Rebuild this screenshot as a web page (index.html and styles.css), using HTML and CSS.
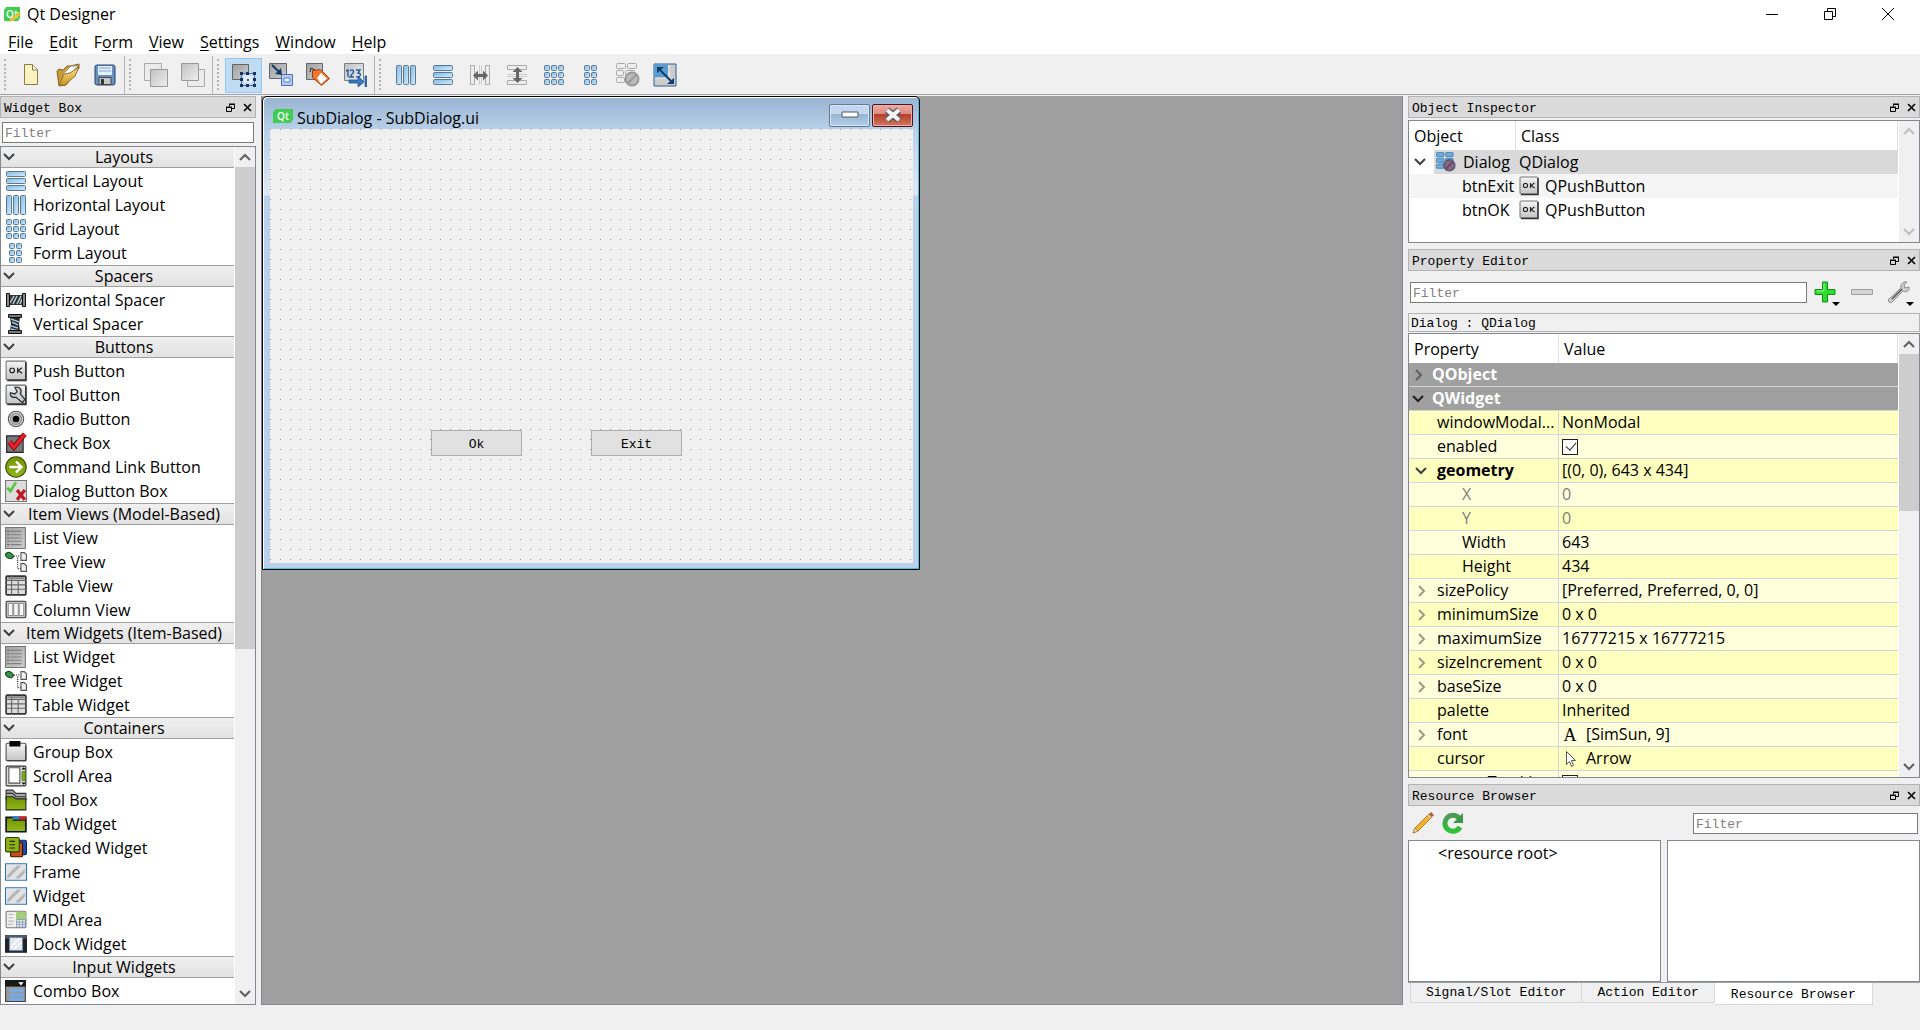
FILE: index.html
```html
<!DOCTYPE html>
<html lang="en">
<head>
<meta charset="utf-8">
<title>Qt Designer</title>
<link rel="stylesheet" href="styles.css">
</head>
<body>
<svg class="defs" aria-hidden="true">
  <defs>
    <linearGradient id="g-blue" x1="0" y1="0" x2="1" y2="1"><stop offset="0" stop-color="#7fb8e0"/><stop offset="1" stop-color="#d4f0ff"/></linearGradient>
    <linearGradient id="g-grey" x1="0" y1="0" x2="1" y2="1"><stop offset="0" stop-color="#c2c2c2"/><stop offset="1" stop-color="#eee"/></linearGradient>
    <linearGradient id="g-dark" x1="0" y1="0" x2="1" y2="1"><stop offset="0" stop-color="#a0a0a0"/><stop offset="1" stop-color="#cfcfcf"/></linearGradient>
    <linearGradient id="g-key" x1="0" y1="0" x2="0" y2="1"><stop offset="0" stop-color="#f4f4f4"/><stop offset="1" stop-color="#c4c4c4"/></linearGradient>
    <linearGradient id="g-gold" x1="0" y1="0" x2="0" y2="1"><stop offset="0" stop-color="#fbe38e"/><stop offset="1" stop-color="#c9962a"/></linearGradient>
    <linearGradient id="g-green" x1="0" y1="0" x2="0" y2="1"><stop offset="0" stop-color="#4f9a58"/><stop offset="1" stop-color="#2fc234"/></linearGradient>
    <linearGradient id="g-olive" x1="0" y1="0" x2="0" y2="1"><stop offset="0" stop-color="#6f9400"/><stop offset="1" stop-color="#93b81a"/></linearGradient>
  </defs>
  <symbol id="i-rows" viewBox="0 0 20 20"><g fill="url(#g-blue)" stroke="#5c7896"><rect x=".5" y=".5" width="19" height="5" rx="1"/><rect x=".5" y="7.500" width="19" height="5" rx="1"/><rect x=".5" y="14.500" width="19" height="5" rx="1"/></g></symbol>
  <symbol id="i-cols" viewBox="0 0 20 20"><g fill="url(#g-blue)" stroke="#5c7896"><rect x=".5" y=".5" width="5" height="19" rx="1"/><rect x="7.500" y=".5" width="5" height="19" rx="1"/><rect x="14.500" y=".5" width="5" height="19" rx="1"/></g></symbol>
  <symbol id="i-grid" viewBox="0 0 20 20"><g fill="url(#g-blue)" stroke="#5c7896"><rect x=".5" y=".5" width="5" height="5" rx="1"/><rect x="7.500" y=".5" width="5" height="5" rx="1"/><rect x="14.500" y=".5" width="5" height="5" rx="1"/><rect x=".5" y="7.500" width="5" height="5" rx="1"/><rect x="7.500" y="7.500" width="5" height="5" rx="1"/><rect x="14.500" y="7.500" width="5" height="5" rx="1"/><rect x=".5" y="14.500" width="5" height="5" rx="1"/><rect x="7.500" y="14.500" width="5" height="5" rx="1"/><rect x="14.500" y="14.500" width="5" height="5" rx="1"/></g></symbol>
  <symbol id="i-form" viewBox="0 0 20 20"><g fill="url(#g-blue)" stroke="#5c7896"><rect x="3.500" y=".5" width="5" height="5" rx="1"/><rect x="10.500" y=".5" width="5" height="5" rx="1"/><rect x="3.500" y="7.500" width="5" height="5" rx="1"/><rect x="10.500" y="7.500" width="5" height="5" rx="1"/><rect x="3.500" y="14.500" width="5" height="5" rx="1"/><rect x="10.500" y="14.500" width="5" height="5" rx="1"/></g></symbol>
  <symbol id="i-hspace" viewBox="0 0 20 20"><path d="M4 5h12v10H4z" fill="#333"/><path d="M4 13l4-7M7 14l4-8M11 14l4-8M14 14l2-5" stroke="#b9cfdd" stroke-width="1.500"/><path d="M.5 3.500h3v13h-3zM16.500 3.500h3v13h-3z" fill="#8a8a8a" stroke="#111"/></symbol>
  <symbol id="i-vspace" viewBox="0 0 20 20"><path d="M4 3h10l-1 7 1 7H4l1-7z" fill="#222"/><path d="M5 5l8 3M6 8l6 3M5 12l7 2M5 15l8 2" stroke="#9cc4dc" stroke-width="1.500"/><path d="M2.500.5h13v3h-13zM2.500 16.500h13v3h-13z" fill="#777" stroke="#111"/></symbol>
  <symbol id="i-push" viewBox="0 0 20 20"><rect x="1" y="1" width="18" height="17" rx="1" fill="url(#g-key)" stroke="#777"/><path d="M2 18.500h17V2" fill="none" stroke="#333" stroke-width="1.500"/><path d="M5.500 7.500h2l1 1v2l-1 1h-2l-1-1v-2zM11.500 7v5M15.500 7l-3.500 2.500 3.500 2.500" fill="none" stroke="#222" stroke-width="1.100"/></symbol>
  <symbol id="i-tool" viewBox="0 0 20 20"><rect x="1" y="1" width="18" height="17" rx="1" fill="url(#g-key)" stroke="#666"/><path d="M2 18.500h17V2" fill="none" stroke="#333" stroke-width="1.500"/><path d="M9 3c4-1 7 2 5 6l4 5-2 3-6-5c-3 1-6-1-5-4l4 1 2-2z" fill="#c9d0d8" stroke="#333" stroke-width="1.200"/></symbol>
  <symbol id="i-radio" viewBox="0 0 20 20"><circle cx="10" cy="10" r="7" fill="#d8d8d8" stroke="#555"/><circle cx="10" cy="10" r="5" fill="#bbb" stroke="#888"/><circle cx="10" cy="10" r="3"/></symbol>
  <symbol id="i-check" viewBox="0 0 20 20"><path d="M1.500 3.500h15v15h-15z" fill="#777" stroke="#222"/><path d="M4 9l4 5L18 2" fill="none" stroke="#7c0008" stroke-width="4.500"/><path d="M4 9l4 5L18 2" fill="none" stroke="#e8202c" stroke-width="3"/></symbol>
  <symbol id="i-cmd" viewBox="0 0 20 20"><circle cx="10" cy="10" r="9.300" fill="url(#g-olive)" stroke="#3a4a08"/><path d="M4 10h10M10 5l5 5-5 5" fill="none" stroke="#fff" stroke-width="2.200"/></symbol>
  <symbol id="i-dbox" viewBox="0 0 20 20"><path d="M.5.5h19v19H.5z" fill="#ddd" stroke="#777"/><path d="M2 7l3 3 5-8" fill="none" stroke="#5cc840" stroke-width="2.500"/><path d="M11 9l7 9M18 9l-7 9" stroke="#c01824" stroke-width="3"/></symbol>
  <symbol id="i-list" viewBox="0 0 20 20"><path d="M.5.5h18v19H.5z" fill="url(#g-dark)" stroke="#777"/><path d="M5 4h10M5 7h10M5 10h10M5 13h10M5 16h10" stroke="#808080"/><path d="M2 4h2M2 7h2M2 10h2M2 13h2M2 16h2" stroke="#666"/></symbol>
  <symbol id="i-tree" viewBox="0 0 20 20"><path d="M0 3c3-3 6-2 8 2l-2 2c-3 0-5-1-6-4z" fill="#37944a" stroke="#174d22"/><path d="M8 4.500h6M11.500 6v10h3" fill="none" stroke="#222" stroke-dasharray="1 1"/><path d="M14.500 1.500h3l2 2v5h-5zM14.500 11.500h3l2 2v5h-5z" fill="#eee" stroke="#555"/></symbol>
  <symbol id="i-table" viewBox="0 0 20 20"><rect x="1" y="1" width="18" height="17" rx="1" fill="#ddd" stroke="#333" stroke-width="1.500"/><path d="M6 1v17M12 5v13M1 5h18M1 9h18M1 13h18" stroke="#666"/><path d="M2 2h16v2H2z" fill="#888"/></symbol>
  <symbol id="i-column" viewBox="0 0 20 20"><rect x="1" y="2" width="18" height="15" rx="1.500" fill="#ccc" stroke="#333"/><path d="M3 4h4v11H3zM8 4h4v11H8zM13 4h4v11h-4z" fill="#fafafa" stroke="#777" stroke-width=".7"/></symbol>
  <symbol id="i-group" viewBox="0 0 20 20"><rect x="1" y="2" width="18" height="16" rx="1" fill="url(#g-key)" stroke="#555"/><path d="M2 18h17V4" fill="none" stroke="#333"/><path d="M4 0h10v5H4z"/></symbol>
  <symbol id="i-scroll" viewBox="0 0 20 20"><rect x="1" y="1" width="18" height="18" rx="1" fill="#ddd" stroke="#333"/><path d="M3.500 2.500h10v14h-10z" fill="#fff" stroke="#555"/><path d="M15.500 6h3v8h-3z" fill="#83ab18" stroke="#455c06" stroke-width=".6"/><path d="M15 4l2-2 2 2zM15 16l2 2 2-2z"/></symbol>
  <symbol id="i-toolbox" viewBox="0 0 20 20"><path d="M1 1h6l3 3h9v6H1z" fill="#aaa" stroke="#333"/><path d="M1 4h6l3 3h9" fill="none" stroke="#333"/><path d="M1 7h6l3 2h9v10H1z" fill="url(#g-olive)" stroke="#222"/></symbol>
  <symbol id="i-tab" viewBox="0 0 20 20"><path d="M1 4h18v13H1z" fill="url(#g-olive)" stroke="#111" stroke-width="1.500"/><path d="M7 3h6v3H7z" fill="#2680d8"/><path d="M13 3h6v3h-6z" fill="#d82430"/><path d="M7 6.500h12" stroke="#111"/></symbol>
  <symbol id="i-stack" viewBox="0 0 20 20"><rect x="9" y="3" width="10.500" height="13" rx="1.500" fill="#1c50b0" stroke="#0a2250"/><rect x="5" y="5" width="11" height="13" rx="1.500" fill="#c4501c" stroke="#3c1204"/><rect x=".5" y=".5" width="12.500" height="13" rx="1.500" fill="#8fb414" stroke="#2e3c04"/><path d="M4 4h5M4 7h5M4 10h5" stroke="#222"/></symbol>
  <symbol id="i-frame" viewBox="0 0 20 20"><path d="M.5 2.500h19v15H.5z" fill="#f0f0f0" stroke="#2f6fc0"/><path d="M2 4h16v12H2z" fill="#e2e2e2"/><path d="M2 13l9-9h4L3 16H2zM9 16L18 7v4l-5 5z" fill="#b6b6b6"/></symbol>
  <symbol id="i-mdi" viewBox="0 0 20 20"><rect x="1" y="2" width="18" height="15" rx="1" fill="#eee" stroke="#777"/><path d="M10 2.500h9v7h-9z" fill="#a4cf7a"/><path d="M3 5h5M3 8h4M3 11h5M3 14h4" stroke="#bbb"/><path d="M10.500 9.500h8v7h-8zM10 12h9M10 14h9M13 9v8M16 9v8" fill="none" stroke="#7c94b4" stroke-width=".7"/></symbol>
  <symbol id="i-dock" viewBox="0 0 20 20"><path d="M0 2h20v16H0z" fill="#222"/><path d="M0 2h20v3H0z" fill="#555"/><path d="M4 4h12v12H4z" fill="#e2e7ee" stroke="#4a7cc0" stroke-dasharray="2 1"/><path d="M5 13l8-8M8 15l7-7" stroke="#fff" stroke-width="1.500"/></symbol>
  <symbol id="i-combo" viewBox="0 0 20 20"><path d="M.5.500h18v19H.5z" fill="#999" stroke="#444"/><path d="M0 0h19v6H0z" fill="#181818"/><path d="M12 2h5l-2.500 3z" fill="#fff"/><path d="M4 8h13v3H4zM4 12h13v3H4zM4 16h13v3H4z" fill="#78aae4"/></symbol>
  <symbol id="i-lineedit" viewBox="0 0 20 20"><path d="M0 0h19v20H0z" fill="#666"/></symbol>
  <symbol id="i-qt" viewBox="0 0 20 14"><path d="M3 0h17v11l-3 3H0V3z" fill="#41cd52"/><text x="10" y="11" text-anchor="middle" class="qt-mark">Qt</text></symbol>
  <symbol id="i-new" viewBox="0 0 24 24"><path d="M5.500 1.500h8l5 5v15h-13z" fill="#fbf3bf" stroke="#8a7a48"/><path d="M13.500 1.500V7h5" fill="#fffdf0" stroke="#8a7a48"/></symbol>
  <symbol id="i-open" viewBox="0 0 24 24"><path d="M1 8l2-2 4 1 4-4 3 0 9-2v4L10 22 3 23z" fill="#c99a36" stroke="#8a651c"/><path d="M6 12L15 3l7 0-9 10z" fill="#fff" stroke="#999"/><path d="M3 22L8 11l6-1 9-6-4 9-10 9z" fill="url(#g-gold)" stroke="#96701e"/></symbol>
  <symbol id="i-save" viewBox="0 0 24 24"><rect x="2" y="2" width="20" height="20" rx="2" fill="#6a92c0" stroke="#27446c"/><path d="M5 3h14v9H5z" fill="#e4f0fa"/><path d="M6 5h12M6 8h12" stroke="#9fc0dd" stroke-width="1.500"/><path d="M6 14.500h12v7H6z" fill="#c8c8c8" stroke="#444"/><path d="M8 16h3v5H8z" fill="#333"/></symbol>
  <symbol id="i-front" viewBox="0 0 24 24"><path d="M.5.5h17v17H.5z" fill="#ececec" stroke="#aaa"/><path d="M6.500 6.500h17v17h-17z" fill="url(#g-grey)" stroke="#999"/></symbol>
  <symbol id="i-back" viewBox="0 0 24 24"><path d="M6.500 6.500h17v17h-17z" fill="#ececec" stroke="#aaa"/><path d="M.5.5h17v17H.5z" fill="url(#g-grey)" stroke="#999"/></symbol>
  <symbol id="i-widgets" viewBox="0 0 24 24"><path d="M.5 1.500h16v15H.5z" fill="url(#g-dark)" stroke="#5f666e"/><path d="M9.500 10.500h13v12h-13z" fill="#c4dcff" stroke="#5670a0"/><path d="M12 13h8v7h-8z" fill="#e6f0ff"/><path d="M8 9h3v3H8zM14 9h3v3h-3zM21 9h3v3h-3zM8 15h3v3H8zM21 15h3v3h-3zM8 21h3v3H8zM14 21h3v3h-3zM21 21h3v3h-3z" fill="#15355c"/><path d="M15 16h2v2h-2z" fill="#2860c0"/></symbol>
  <symbol id="i-signals" viewBox="0 0 24 24"><path d="M.5.5h17v15H.5z" fill="url(#g-dark)" stroke="#5f666e"/><path d="M12.500 11.500h11v11h-11z" fill="#b4ccf8" stroke="#4c74b4"/><path d="M15 15h6v4h-6z" fill="#eaf2ff" stroke="#5c84c4"/><path d="M3 2l8 8" stroke="#143c64" stroke-width="2"/><path d="M13 12l-1-7-6 6z" fill="#143c64"/></symbol>
  <symbol id="i-buddies" viewBox="0 0 24 24"><path d="M.5.5h16v16H.5z" fill="url(#g-dark)" stroke="#5f666e"/><path d="M4 9l1-4 4 2" fill="none" stroke="#222"/><path d="M6.500 7.500l8-1 9 9-8 7-9-8z" fill="#ee7832" stroke="#a43c10"/><path d="M15 10l6 5.500-6 5.500-4-6z" fill="#fff"/></symbol>
  <symbol id="i-taborder" viewBox="0 0 24 24"><path d="M1.500.5h19v17h-19z" fill="url(#g-grey)" stroke="#7a8088"/><path d="M3 8l2-1v7M7 8c3-3 5 1 2 3l-2 3h4M13 7h4l-2 3c4 0 3 5-2 4" fill="none" stroke="#285ca0" stroke-width="1.400"/><path d="M6 17h9v-4l6 6-6 5v-4H6zM22 13h2v11h-2z" fill="#3c78c0" stroke="#184888" stroke-width=".7"/></symbol>
  <symbol id="i-hsplit" viewBox="0 0 20 20"><path d="M.5.5h4v19h-4zM15.500.500h4v19h-4z" fill="#eee" stroke="#aaa"/><path d="M9.500 0v20M11.500 0v20" stroke="#bbb" stroke-width=".7"/><path d="M3 10.500l5-5v3.500h5v-3.500l5 5-5 5V12H8v3.500z" fill="#666"/></symbol>
  <symbol id="i-vsplit" viewBox="0 0 20 20"><path d="M.5.5h19v4H.5zM.5 15.500h19v4H.5z" fill="#eee" stroke="#aaa"/><path d="M0 9.500h20M0 11.500h20" stroke="#bbb" stroke-width=".7"/><path d="M10.500 2l5 5h-3.500v6h3.500l-5 5-5-5H9V7H5.500z" fill="#666"/></symbol>
  <symbol id="i-break" viewBox="0 0 24 24"><g fill="#eee" stroke="#aaa"><rect x=".5" y=".5" width="9" height="5" rx="1"/><rect x="11.500" y=".5" width="9" height="5" rx="1"/><rect x=".5" y="7.500" width="7" height="5" rx="1"/><rect x="9.500" y="7.500" width="9" height="5" rx="1"/><rect x=".5" y="14.500" width="8" height="5" rx="1"/></g><circle cx="16" cy="16" r="6.500" fill="#bbb" stroke="#999" stroke-width="2"/><path d="M12 20l8-8" stroke="#999" stroke-width="2"/></symbol>
  <symbol id="i-breakblue" viewBox="0 0 24 24"><g fill="#6aacdc" stroke="#3c7cb0"><rect x=".5" y=".5" width="9" height="5" rx="1"/><rect x="11.500" y=".5" width="9" height="5" rx="1"/><rect x=".5" y="7.500" width="9" height="5" rx="1"/><rect x="11.500" y="7.500" width="9" height="5" rx="1"/><rect x=".5" y="14.500" width="9" height="5" rx="1"/></g><circle cx="16" cy="16" r="6.500" fill="#8c6880" stroke="#5c5878" stroke-width="2"/><path d="M12 20l8-8" stroke="#5c4868" stroke-width="2"/></symbol>
  <symbol id="i-adjust" viewBox="0 0 24 24"><path d="M1 1h22v22H1z" fill="#ccc" stroke="#2c5c90"/><path d="M1 1h14v14H1z" fill="#5c9ccc"/><path d="M2 15h14V2" fill="none" stroke="#f4f4f4"/><path d="M6 6l12 12" stroke="#0c3c70" stroke-width="2"/><path d="M4 4h7l-7 6zM21 21h-7l7-6z" fill="#0c3c70"/></symbol>
  <symbol id="i-plus" viewBox="0 0 22 22"><path d="M8.500 1h5v7.500H21v5h-7.500V21h-5v-7.500H1v-5h7.500z" fill="#2ddc2d" stroke="#109018"/><path d="M10 3v7H3" fill="none" stroke="#a4f4a0"/></symbol>
  <symbol id="i-minus" viewBox="0 0 22 22"><path d="M.5 8.500h21v5H.5z" fill="#d4d4d4" stroke="#a0a0a0"/></symbol>
  <symbol id="i-wrench" viewBox="0 0 22 22"><path d="M1 21l-1-2L13 7c-1-3 2-7 6-6l-3 3 1 3 4-1c1 4-3 6-6 4L3 22z" fill="#ccc" stroke="#777" stroke-width=".8"/><path d="M4 18L14 8" stroke="#555" stroke-width="1.500"/></symbol>
  <symbol id="i-pencil" viewBox="0 0 22 22"><path d="M1 21l2-5L17 2l3 3L6 19z" fill="#f0b434" stroke="#b87c1c"/><path d="M1 21l2-5 3 3z" fill="#ecdcb0" stroke="#887040" stroke-width=".6"/><path d="M17 2l2-2 3 3-2 2z" fill="#b45c40"/><path d="M16 3l3 3" stroke="#ccc" stroke-width="1.500"/></symbol>
  <symbol id="i-reload" viewBox="0 0 22 22"><path d="M18 15a8 8 0 1 1-1-9" fill="none" stroke="url(#g-green)" stroke-width="5"/><path d="M21 1v10H11z" fill="#3f9848"/></symbol>
  <symbol id="i-down" viewBox="0 0 12 8"><path d="M1 1l5 5 5-5" fill="none" stroke="currentColor" stroke-width="2"/></symbol>
  <symbol id="i-up" viewBox="0 0 12 8"><path d="M1 7l5-5 5 5" fill="none" stroke="currentColor" stroke-width="2"/></symbol>
  <symbol id="i-right" viewBox="0 0 8 12"><path d="M1 1l5 5-5 5" fill="none" stroke="currentColor" stroke-width="2"/></symbol>
  <symbol id="i-float" viewBox="0 0 9 9"><path d="M3.500 3V1.500h5v4H6M3 1h6" fill="none" stroke="#000"/><path d="M.5 4.500h5v4h-5zM0 4h6" fill="none" stroke="#000"/></symbol>
  <symbol id="i-x" viewBox="0 0 9 9"><path d="M1 1l7 7M8 1L1 8" stroke="#000" stroke-width="1.600"/></symbol>
</svg>

<header class="titlebar">
  <svg class="app-icon" viewBox="0 0 17 15"><path d="M2 0h14v11l-2 3H0V3z" fill="#41cd52"/><text x="8" y="11" text-anchor="middle" class="qt-mark">Qt</text><path d="M5 15l2-4 8-6 2 2-8 7z" fill="#e8c040"/></svg>
  <h1 class="app-title">Qt Designer</h1>
  <div class="window-controls">
    <button aria-label="Minimize"><svg width="12" height="12"><path d="M0 6.500h12" stroke="#000"/></svg></button>
    <button aria-label="Restore"><svg width="12" height="12"><path d="M.5 3.500h8v8h-8zM3.500 3V.5h8v8H9" fill="none" stroke="#000"/></svg></button>
    <button aria-label="Close"><svg width="12" height="12"><path d="M0 0l12 12M12 0L0 12" stroke="#000"/></svg></button>
  </div>
</header>

<nav class="menubar">
  <button><u>F</u>ile</button><button><u>E</u>dit</button><button>F<u>o</u>rm</button><button><u>V</u>iew</button><button><u>S</u>ettings</button><button><u>W</u>indow</button><button><u>H</u>elp</button>
</nav>

<div class="toolbars">
  <div class="toolbar">
    <button aria-label="New"><svg class="i24"><use href="#i-new"/></svg></button>
    <button aria-label="Open"><svg class="i24"><use href="#i-open"/></svg></button>
    <button aria-label="Save"><svg class="i24"><use href="#i-save"/></svg></button>
  </div>
  <div class="toolbar">
    <button aria-label="Bring to front"><svg class="i24"><use href="#i-front"/></svg></button>
    <button aria-label="Send to back"><svg class="i24"><use href="#i-back"/></svg></button>
  </div>
  <div class="toolbar">
    <button class="active" aria-label="Edit widgets"><svg class="i24"><use href="#i-widgets"/></svg></button>
    <button aria-label="Edit signals"><svg class="i24"><use href="#i-signals"/></svg></button>
    <button aria-label="Edit buddies"><svg class="i24"><use href="#i-buddies"/></svg></button>
    <button aria-label="Edit tab order"><svg class="i24"><use href="#i-taborder"/></svg></button>
  </div>
  <div class="toolbar last">
    <button aria-label="Lay out horizontally"><svg class="i20"><use href="#i-cols"/></svg></button>
    <button aria-label="Lay out vertically"><svg class="i20"><use href="#i-rows"/></svg></button>
    <button aria-label="Horizontal splitter"><svg class="i20"><use href="#i-hsplit"/></svg></button>
    <button aria-label="Vertical splitter"><svg class="i20"><use href="#i-vsplit"/></svg></button>
    <button aria-label="Grid layout"><svg class="i20"><use href="#i-grid"/></svg></button>
    <button aria-label="Form layout"><svg class="i20"><use href="#i-form"/></svg></button>
    <button aria-label="Break layout"><svg class="i24"><use href="#i-break"/></svg></button>
    <button aria-label="Adjust size"><svg class="i24"><use href="#i-adjust"/></svg></button>
  </div>
</div>

<main class="workspace">
  <aside class="dock dock-left">
    <div class="dock-title"><h2>Widget Box</h2><button aria-label="Float"><svg><use href="#i-float"/></svg></button><button aria-label="Close"><svg><use href="#i-x"/></svg></button></div>
    <div class="filter-row"><input class="filter" type="text" placeholder="Filter" aria-label="Filter widgets"></div>
    <div class="pane widget-list">
      <div class="pane-body">
        <h3 class="cat"><svg><use href="#i-down"/></svg>Layouts</h3>
        <ul class="layouts"><li><svg><use href="#i-rows"/></svg>Vertical Layout</li><li><svg><use href="#i-cols"/></svg>Horizontal Layout</li><li><svg><use href="#i-grid"/></svg>Grid Layout</li><li><svg><use href="#i-form"/></svg>Form Layout</li></ul>
        <h3 class="cat"><svg><use href="#i-down"/></svg>Spacers</h3>
        <ul class="layouts"><li><svg><use href="#i-hspace"/></svg>Horizontal Spacer</li><li><svg><use href="#i-vspace"/></svg>Vertical Spacer</li></ul>
        <h3 class="cat"><svg><use href="#i-down"/></svg>Buttons</h3>
        <ul><li><svg><use href="#i-push"/></svg>Push Button</li><li><svg><use href="#i-tool"/></svg>Tool Button</li><li><svg><use href="#i-radio"/></svg>Radio Button</li><li><svg><use href="#i-check"/></svg>Check Box</li><li><svg><use href="#i-cmd"/></svg>Command Link Button</li><li><svg><use href="#i-dbox"/></svg>Dialog Button Box</li></ul>
        <h3 class="cat"><svg><use href="#i-down"/></svg>Item Views (Model-Based)</h3>
        <ul><li><svg><use href="#i-list"/></svg>List View</li><li><svg><use href="#i-tree"/></svg>Tree View</li><li><svg><use href="#i-table"/></svg>Table View</li><li><svg><use href="#i-column"/></svg>Column View</li></ul>
        <h3 class="cat"><svg><use href="#i-down"/></svg>Item Widgets (Item-Based)</h3>
        <ul><li><svg><use href="#i-list"/></svg>List Widget</li><li><svg><use href="#i-tree"/></svg>Tree Widget</li><li><svg><use href="#i-table"/></svg>Table Widget</li></ul>
        <h3 class="cat"><svg><use href="#i-down"/></svg>Containers</h3>
        <ul><li><svg><use href="#i-group"/></svg>Group Box</li><li><svg><use href="#i-scroll"/></svg>Scroll Area</li><li><svg><use href="#i-toolbox"/></svg>Tool Box</li><li><svg><use href="#i-tab"/></svg>Tab Widget</li><li><svg><use href="#i-stack"/></svg>Stacked Widget</li><li><svg><use href="#i-frame"/></svg>Frame</li><li><svg><use href="#i-frame"/></svg>Widget</li><li><svg><use href="#i-mdi"/></svg>MDI Area</li><li><svg><use href="#i-dock"/></svg>Dock Widget</li></ul>
        <h3 class="cat"><svg><use href="#i-down"/></svg>Input Widgets</h3>
        <ul><li><svg><use href="#i-combo"/></svg>Combo Box</li><li><svg><use href="#i-lineedit"/></svg></li></ul>
      </div>
      <div class="scrollbar"><button aria-label="Scroll up"><svg><use href="#i-up"/></svg></button><div class="track"><div class="thumb" style="height:59%"></div></div><button aria-label="Scroll down"><svg><use href="#i-down"/></svg></button></div>
    </div>
  </aside>

  <section class="mdi">
    <div class="subwindow">
      <div class="sub-title">
        <svg class="sub-icon"><use href="#i-qt"/></svg>
        <h2>SubDialog - SubDialog.ui</h2>
        <button class="sub-min" aria-label="Minimize"><svg width="18" height="8"><path d="M1 1h16v5H1z" fill="#fff" stroke="#4f5a68"/></svg></button>
        <button class="sub-close" aria-label="Close"><svg width="20" height="16"><path d="M4 3l12 10M16 3L4 13" stroke="#555a68" stroke-width="6.500"/><path d="M4 3l12 10M16 3L4 13" stroke="#f4f4f4" stroke-width="4"/></svg></button>
      </div>
      <div class="canvas">
        <button class="form-btn ok">Ok</button>
        <button class="form-btn exit">Exit</button>
      </div>
    </div>
  </section>

  <aside class="dock dock-right">
    <div class="dock-title"><h2>Object Inspector</h2><button aria-label="Float"><svg><use href="#i-float"/></svg></button><button aria-label="Close"><svg><use href="#i-x"/></svg></button></div>
    <div class="pane inspector">
      <div class="pane-body">
        <table class="objects">
          <colgroup><col class="c-object"><col></colgroup>
          <thead><tr><th>Object</th><th>Class</th></tr></thead>
          <tbody>
            <tr class="selected"><td><div class="cell wide"><svg class="twist"><use href="#i-down"/></svg><svg class="i20"><use href="#i-breakblue"/></svg>Dialog</div></td><td>QDialog</td></tr>
            <tr class="alt"><td class="child">btnExit</td><td><div class="cell"><svg class="i20"><use href="#i-push"/></svg>QPushButton</div></td></tr>
            <tr><td class="child">btnOK</td><td><div class="cell"><svg class="i20"><use href="#i-push"/></svg>QPushButton</div></td></tr>
          </tbody>
        </table>
      </div>
      <div class="scrollbar disabled"><button disabled aria-label="Scroll up"><svg><use href="#i-up"/></svg></button><div class="track"></div><button disabled aria-label="Scroll down"><svg><use href="#i-down"/></svg></button></div>
    </div>

    <div class="dock-title spaced"><h2>Property Editor</h2><button aria-label="Float"><svg><use href="#i-float"/></svg></button><button aria-label="Close"><svg><use href="#i-x"/></svg></button></div>
    <div class="prop-tools">
      <input class="filter" type="text" placeholder="Filter" aria-label="Filter properties">
      <button class="has-menu" aria-label="Add"><svg class="i22"><use href="#i-plus"/></svg></button>
      <button aria-label="Remove"><svg class="i22"><use href="#i-minus"/></svg></button>
      <button class="has-menu" aria-label="Configure"><svg class="i22"><use href="#i-wrench"/></svg></button>
    </div>
    <div class="object-label">Dialog : QDialog</div>
    <div class="pane properties">
      <div class="pane-body">
        <table class="props">
          <colgroup><col class="c-prop"><col></colgroup>
          <thead><tr><th>Property</th><th>Value</th></tr></thead>
          <tbody>
            <tr class="group"><td colspan="2"><svg class="tw-right"><use href="#i-right"/></svg>QObject</td></tr>
            <tr class="group"><td colspan="2"><svg class="tw-down"><use href="#i-down"/></svg>QWidget</td></tr>
            <tr><td>windowModal...</td><td>NonModal</td></tr>
            <tr><td><label for="enabled">enabled</label></td><td><input id="enabled" type="checkbox" checked></td></tr>
            <tr><td><svg class="tw-down"><use href="#i-down"/></svg><b>geometry</b></td><td>[(0, 0), 643 x 434]</td></tr>
            <tr class="muted"><td class="sub">X</td><td>0</td></tr>
            <tr class="muted"><td class="sub">Y</td><td>0</td></tr>
            <tr><td class="sub">Width</td><td>643</td></tr>
            <tr><td class="sub">Height</td><td>434</td></tr>
            <tr><td><svg class="tw-right"><use href="#i-right"/></svg>sizePolicy</td><td>[Preferred, Preferred, 0, 0]</td></tr>
            <tr><td><svg class="tw-right"><use href="#i-right"/></svg>minimumSize</td><td>0 x 0</td></tr>
            <tr><td><svg class="tw-right"><use href="#i-right"/></svg>maximumSize</td><td>16777215 x 16777215</td></tr>
            <tr><td><svg class="tw-right"><use href="#i-right"/></svg>sizeIncrement</td><td>0 x 0</td></tr>
            <tr><td><svg class="tw-right"><use href="#i-right"/></svg>baseSize</td><td>0 x 0</td></tr>
            <tr><td>palette</td><td>Inherited</td></tr>
            <tr><td><svg class="tw-right"><use href="#i-right"/></svg>font</td><td><div class="value"><span class="font-glyph">A</span>[SimSun, 9]</div></td></tr>
            <tr><td>cursor</td><td><div class="value"><svg class="cursor-glyph" viewBox="0 0 16 18"><path d="M4.500 1.500v13l3-3 2 5 2-1-2-5h4z" fill="#fff" stroke="#555"/></svg>Arrow</div></td></tr>
            <tr><td><label for="tracking">mouseTracking</label></td><td><input id="tracking" type="checkbox"></td></tr>
          </tbody>
        </table>
      </div>
      <div class="scrollbar"><button aria-label="Scroll up"><svg><use href="#i-up"/></svg></button><div class="track"><div class="thumb" style="height:39%"></div></div><button aria-label="Scroll down"><svg><use href="#i-down"/></svg></button></div>
    </div>

    <div class="dock-title spaced"><h2>Resource Browser</h2><button aria-label="Float"><svg><use href="#i-float"/></svg></button><button aria-label="Close"><svg><use href="#i-x"/></svg></button></div>
    <div class="res-tools">
      <button aria-label="Edit resources"><svg class="i22"><use href="#i-pencil"/></svg></button>
      <button aria-label="Reload"><svg class="i22"><use href="#i-reload"/></svg></button>
      <input class="filter" type="text" placeholder="Filter" aria-label="Filter resources">
    </div>
    <div class="resources">
      <div class="pane"><span class="res-root">&lt;resource root&gt;</span></div>
      <div class="pane"></div>
    </div>
    <div class="tabs" role="tablist">
      <button role="tab" class="tab">Signal/Slot Editor</button>
      <button role="tab" class="tab">Action Editor</button>
      <button role="tab" class="tab current" aria-selected="true">Resource Browser</button>
    </div>
  </aside>
</main>
<footer class="statusbar"></footer>
</body>
</html>
```
FILE: styles.css
```css
* { box-sizing: border-box; }

body {
  margin: 0;
  height: 100vh;
  display: flex;
  flex-direction: column;
  overflow: hidden;
  background: #f0f0f0;
  color: #000;
  font: 16px/24px "Open Sans", "Noto Sans", sans-serif;
}

h1, h2, h3, ul { margin: 0; padding: 0; font: inherit; list-style: none; }
button { margin: 0; padding: 0; border: 0; background: none; color: inherit; font: inherit; }
svg { display: block; flex: none; }
.defs { position: absolute; width: 0; height: 0; }
.qt-mark { font: 600 10px "Open Sans", sans-serif; fill: #fff; }
.i20 { width: 20px; height: 20px; }
.i22 { width: 22px; height: 22px; }
.i24 { width: 24px; height: 24px; }

/* Title bar and menus */
.titlebar { display: flex; align-items: center; height: 28px; padding: 0 3px 0 4px; background: #fff; }
.app-icon { width: 17px; height: 15px; margin-right: 6px; }
.app-title { flex: 1; }
.window-controls { display: flex; }
.window-controls button { display: grid; place-items: center; width: 58px; height: 28px; }
.menubar { display: flex; height: 28px; padding-top: 2px; background: #fff; border-bottom: 2px solid #f0f0f0; }
.menubar button { padding: 0 8px; line-height: 24px; }
.menubar u { text-underline-offset: 2px; }

/* Toolbars */
.toolbars { display: flex; height: 39px; border-bottom: 1px solid #a0a0a8; }
.toolbar { position: relative; display: flex; align-items: center; padding: 0 1px 0 12px; border-right: 1px solid #b4b4b4; }
.toolbar::before { content: ""; position: absolute; left: 4px; top: 3px; bottom: 4px; border-left: 2px dotted #b4b4b4; }
.toolbar.last { border-right: 0; }
.toolbar button { display: grid; place-items: center; width: 37px; height: 35px; border: 1px solid transparent; }
.toolbar .active { background: #c0dcf3; border-color: #90c8f6; }

/* Docks */
.workspace { flex: 1; display: flex; min-height: 0; padding-top: 1px; }
.dock { display: flex; flex-direction: column; min-height: 0; flex: none; }
.dock-left { width: 256px; }
.dock-right { width: 512px; margin-left: 5px; }
.dock-title { display: flex; align-items: center; flex: none; height: 22px; padding: 0 3px; border: 1px solid #b4b4b4; background: #dadada; }
.dock-title.spaced { margin-top: 6px; }
.dock-title h2 { flex: 1; }
.dock-title button { width: 9px; height: 9px; margin-left: 8px; }
.dock-title svg { width: 9px; height: 9px; }
.dock-title h2, .object-label, .tab, .filter, .form-btn { font: 13px/20px "Liberation Mono", "Courier New", monospace; }
.dock-title h2 { padding-top: 3px; }
.filter { height: 21px; min-width: 0; padding: 2px 2px 0; border: 1px solid #7a7a7a; background: #fff; outline: 0; }
.filter::placeholder { color: #808080; opacity: 1; }
.filter-row { display: flex; padding: 4px 2px 3px; }
.filter-row .filter { flex: 1; }

.pane { display: flex; min-height: 0; border: 1px solid #828790; background: #fff; }
.pane-body { flex: 1; min-width: 0; overflow: hidden; }
.scrollbar { display: flex; flex-direction: column; width: 20px; margin-left: 1px; background: #f0f0f0; color: #606060; }
.scrollbar button { display: grid; place-items: center; height: 20px; }
.scrollbar svg { width: 12px; height: 8px; }
.scrollbar .track { flex: 1; }
.scrollbar .thumb { background: #cdcdcd; }
.scrollbar.disabled { color: #bfbfbf; }

/* Widget box */
.widget-list { flex: 1; }
.cat { display: flex; align-items: center; justify-content: center; position: relative; height: 22px; padding-left: 13px; border: solid #a0a0a0; border-width: 1px 0; background: linear-gradient(#f0f0f0, #e2e2e2); }
.cat:first-child { height: 21px; border-top: 0; }
.cat svg { position: absolute; left: 2px; top: 6px; width: 12px; height: 8px; color: #404040; }
.widget-list ul { padding-top: 1px; }
.widget-list li { display: flex; align-items: center; gap: 6px; height: 24px; padding-left: 4px; }
.widget-list li svg { width: 22px; height: 22px; }
.widget-list .layouts svg { width: 20px; height: 20px; margin: 0 1px; }

/* Form area */
.mdi { position: relative; flex: 1; min-width: 0; overflow: hidden; margin-left: 5px; border: 1px solid #828790; border-top: 0; background: #a0a0a0; }
.subwindow { position: absolute; left: 0; top: 0; padding: 0 6px 6px; border: 1px solid #000; border-radius: 5px 5px 0 0; background: linear-gradient(#99b4d1, #b9d1ea 34px, #dfe9f5 98px, #b9d1ea 99px); box-shadow: inset 1px 1px #fff, inset -1px -1px #35c8e4; }
.sub-title { display: flex; align-items: center; height: 32px; padding: 4px 0 0 4px; }
.sub-icon { width: 20px; height: 14px; margin: 2px 4px 0 0; }
.sub-title h2 { flex: 1; padding-top: 6px; }
.sub-title button { display: grid; place-items: center; width: 41px; height: 23px; margin-left: 2px; border-radius: 2px; }
.sub-min { border: 1px solid #5f7896; background: linear-gradient(#c4d7ee 42%, #98b4d0 43%, #b4cee8); box-shadow: inset 0 0 0 1px #d8e6f6; }
.sub-close { border: 1px solid #4c1420; background: linear-gradient(#eda9a0, #dc8c80 42%, #b43c28 43%, #d07860); box-shadow: inset 0 0 0 1px #eeb0a8; }
.canvas { position: relative; width: 643px; height: 434px; margin-left: 1px; background: linear-gradient(transparent 1px, #f0f0f0 1px) 0 0 / 10px 10px, linear-gradient(90deg, #969696 1px, #f0f0f0 1px) 0 0 / 10px 10px; }
.form-btn { position: absolute; top: 301px; width: 91px; height: 26px; padding-top: 3px; border: 1px solid #adadad; background: #e1e1e1; }
.form-btn.ok { left: 161px; }
.form-btn.exit { left: 321px; }

/* Object inspector */
.inspector { flex: 122 0 0; margin-top: 2px; }
table { width: 100%; border-collapse: separate; border-spacing: 0; table-layout: fixed; }
th { height: 29px; padding: 0 5px; font-weight: 400; text-align: left; border-right: 1px solid #e0e0e0; }
td { height: 24px; padding: 0; line-height: 23px; white-space: nowrap; overflow: hidden; }
.c-object { width: 107px; }
.objects td:nth-child(2) { padding-left: 3px; }
.objects .child { padding-left: 53px; }
.objects .alt { background: #f5f5f5; }
.selected { background: linear-gradient(90deg, #fff 25px, #d9d9d9 25px); }
.cell { display: flex; align-items: center; gap: 6px; }
.cell.wide { gap: 7px; }
.twist { width: 12px; height: 8px; margin: 0 3px 0 5px; color: #404040; }

/* Property editor */
.prop-tools { display: flex; align-items: center; flex: none; height: 42px; padding: 0 10px 0 2px; }
.prop-tools .filter { flex: 1; }
.prop-tools button { position: relative; width: 22px; height: 22px; margin-left: 7px; }
.prop-tools button + button { margin-left: 15px; }
.has-menu::after { content: ""; position: absolute; right: -4px; bottom: -3px; border: 4px solid transparent; border-top-color: #000; border-bottom: 0; }
.object-label { flex: none; height: 19px; margin-bottom: 1px; padding-left: 2px; line-height: 19px; border: 1px solid #b4b4b4; }
.properties { flex: 446 0 0; }
.c-prop { width: 150px; }
.props td { position: relative; padding-left: 28px; border-bottom: 1px solid #d4d4d4; background: #ffffdc; }
.props tr:nth-child(odd) td { background: #ffffbf; }
.props td:first-child { border-right: 1px solid #d4d4d4; }
.props td:nth-child(2) { padding-left: 3px; }
.props tr.group td { padding-left: 23px; border-right: 0; background: #a0a0a0; color: #fff; font-weight: 700; }
.props .sub { padding-left: 53px; }
.props .muted { color: #808080; }
.props td > svg { position: absolute; color: #9c9c80; }
.tw-right { width: 8px; height: 12px; left: 9px; top: 6px; }
.props .tw-down { width: 12px; height: 8px; left: 6px; top: 8px; color: #404040; }
.props .group svg { left: 6px; color: #606060; }
.props .group .tw-down { left: 3px; color: #202020; }
input[type="checkbox"] { appearance: none; display: block; width: 16px; height: 16px; margin: 0; border: 1px solid #202020; background: #fff; }
input[type="checkbox"]:checked::after { content: ""; display: block; width: 5px; height: 9px; margin: 0 0 0 5px; border: solid #303030; border-width: 0 1px 1px 0; transform: rotate(42deg); }
.value { display: flex; align-items: center; gap: 8px; }
.font-glyph { width: 16px; text-align: center; font: 18px/20px "Liberation Serif", serif; }
.cursor-glyph { width: 16px; height: 18px; }

/* Resource browser */
.res-tools { display: flex; align-items: center; flex: none; gap: 8px; height: 34px; padding: 0 2px 0 4px; }
.res-tools .filter { width: 225px; margin-left: auto; }
.resources { flex: 143 0 0; display: flex; gap: 6px; min-height: 0; border-bottom: 1px solid #a0a0a0; }
.resources .pane { flex: 1; }
.res-root { padding-left: 29px; }
.tabs { display: flex; align-items: flex-start; flex: none; height: 22px; padding-left: 2px; }
.tab { height: 20px; padding: 1px 15px 0; border: 1px solid #d9d9d9; border-top: 0; line-height: 18px; }
.tab + .tab { border-left: 0; }
.tab.current { height: 22px; padding: 2px 16px 0; background: #fff; }
.statusbar { flex: none; height: 25px; }
```
